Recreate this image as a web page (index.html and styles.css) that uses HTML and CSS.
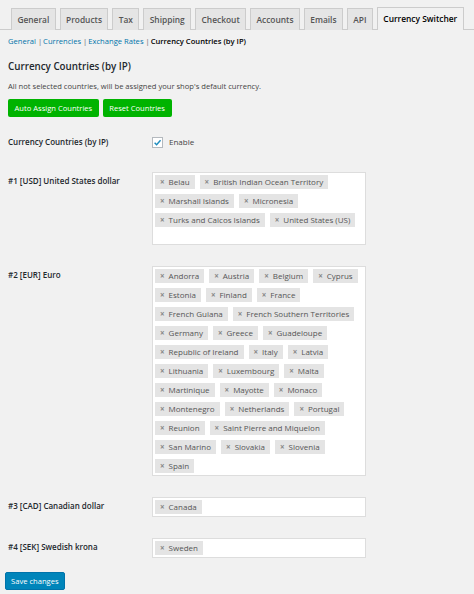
FILE: index.html
```html
<!DOCTYPE html>
<html lang="en">
    <head>
        <meta charset="UTF-8">
        <title>Currency Switcher Settings</title>
        <link rel="stylesheet" href="styles.css">
    </head>
    <body>
        <nav class="nav-tabs">
            <a class="nav-tab">General</a>
            <a class="nav-tab">Products</a>
            <a class="nav-tab">Tax</a>
            <a class="nav-tab">Shipping</a>
            <a class="nav-tab">Checkout</a>
            <a class="nav-tab">Accounts</a>
            <a class="nav-tab">Emails</a>
            <a class="nav-tab">API</a>
            <a class="nav-tab active">Currency Switcher</a>
        </nav>
        <main class="wrap">
            <ul class="subsubsub">
                <li><a>General</a> |</li>
                <li><a>Currencies</a> |</li>
                <li><a>Exchange Rates</a> |</li>
                <li class="current">Currency Countries (by IP)</li>
            </ul>
            <h2>Currency Countries (by IP)</h2>
            <p class="desc">All not selected countries, will be assigned your shop's default currency.</p>
            <div class="actions">
                <button class="btn-green">Auto Assign Countries</button>
                <button class="btn-green">Reset Countries</button>
            </div>
            <div class="form-table">
                <div class="row">
                    <div class="th">Currency Countries (by IP)</div>
                    <label class="enable"><span class="checkbox"><svg viewBox="0 0 10 10" width="9" height="9"><path d="M1.8 5.2 L4 7.4 L8.4 2.4" fill="none" stroke="#1e8cbe" stroke-width="1.6"/></svg></span>Enable</label>
                </div>
                <div class="row">
                    <div class="th">#1 [USD] United States dollar</div>
                    <ul class="select">
                        <li class="chip">Belau</li>
                        <li class="chip">British Indian Ocean Territory</li>
                        <li class="chip">Marshall Islands</li>
                        <li class="chip">Micronesia</li>
                        <li class="chip">Turks and Caicos Islands</li>
                        <li class="chip">United States (US)</li>
                        <li class="search"></li>
                    </ul>
                </div>
                <div class="row">
                    <div class="th">#2 [EUR] Euro</div>
                    <ul class="select">
                        <li class="chip">Andorra</li>
                        <li class="chip">Austria</li>
                        <li class="chip">Belgium</li>
                        <li class="chip">Cyprus</li>
                        <li class="chip">Estonia</li>
                        <li class="chip">Finland</li>
                        <li class="chip">France</li>
                        <li class="chip">French Guiana</li>
                        <li class="chip">French Southern Territories</li>
                        <li class="chip">Germany</li>
                        <li class="chip">Greece</li>
                        <li class="chip">Guadeloupe</li>
                        <li class="chip">Republic of Ireland</li>
                        <li class="chip">Italy</li>
                        <li class="chip">Latvia</li>
                        <li class="chip">Lithuania</li>
                        <li class="chip">Luxembourg</li>
                        <li class="chip">Malta</li>
                        <li class="chip">Martinique</li>
                        <li class="chip">Mayotte</li>
                        <li class="chip">Monaco</li>
                        <li class="chip">Montenegro</li>
                        <li class="chip">Netherlands</li>
                        <li class="chip">Portugal</li>
                        <li class="chip">Reunion</li>
                        <li class="chip">Saint Pierre and Miquelon</li>
                        <li class="chip">San Marino</li>
                        <li class="chip">Slovakia</li>
                        <li class="chip">Slovenia</li>
                        <li class="chip">Spain</li>
                        <li class="search"></li>
                    </ul>
                </div>
                <div class="row">
                    <div class="th">#3 [CAD] Canadian dollar</div>
                    <ul class="select">
                        <li class="chip">Canada</li>
                        <li class="search"></li>
                    </ul>
                </div>
                <div class="row">
                    <div class="th">#4 [SEK] Swedish krona</div>
                    <ul class="select">
                        <li class="chip">Sweden</li>
                        <li class="search"></li>
                    </ul>
                </div>
            </div>
            <button class="btn-primary">Save changes</button>
        </main>
    </body>
</html>
```

FILE: styles.css
```css
body{
    font-family: "Open Sans", "Noto Sans", sans-serif;
    font-size: 7.6px;
    margin: 0;
    padding: 0;
    background-color: #F1F1F1;
    color: #444;
    width: 474px;
    height: 594px;
    overflow: hidden;
}
.nav-tabs{
    display: flex;
    gap: 4px;
    padding: 8px 0 0 11px;
    border-bottom: 1px solid #CCC;
    height: 30px;
    box-sizing: border-box;
    align-items: flex-end;
}
.nav-tab{
    display: block;
    height: 22px;
    box-sizing: border-box;
    padding: 0 5.4px;
    line-height: 21px;
    font-size: 8.4px;
    font-weight: 600;
    color: #555;
    background-color: #E5E5E5;
    border: 1px solid #CCC;
    border-bottom: none;
    margin-bottom: -1px;
    white-space: nowrap;
}
.nav-tab.active{
    color: #000;
    background-color: #F1F1F1;
    height: 23px;
}
.wrap{
    padding: 0 8px;
}
.subsubsub{
    list-style: none;
    margin: 5px 0 0;
    padding: 0;
    display: flex;
    gap: 1px;
    line-height: 12px;
    color: #666;
}
.subsubsub a{
    color: #0073AA;
}
.subsubsub .current{
    color: #000;
    font-weight: 600;
}
h2{
    font-size: 9.8px;
    font-weight: 600;
    color: #23282D;
    margin: 12px 0 0;
    line-height: 16px;
}
.desc{
    margin: 5px 0 0;
    line-height: 12px;
}
.actions{
    display: flex;
    gap: 4px;
    margin-top: 7px;
}
.btn-green{
    font-family: inherit;
    font-size: 7.6px;
    color: #FFF;
    background-color: #00B300;
    border: none;
    border-radius: 2px;
    height: 18px;
    padding: 0 6.5px;
}
.form-table{
    margin-top: 16px;
}
.row{
    display: grid;
    grid-template-columns: 144px 214px;
    align-items: start;
    padding: 0 0 21px;
}
.row:first-child{
    padding-bottom: 24px;
}
.th{
    font-size: 8px;
    font-weight: 600;
    color: #23282D;
    line-height: 12px;
    padding-top: 3px;
}
.enable{
    display: flex;
    align-items: center;
    gap: 6px;
    line-height: 12px;
    padding-top: 3px;
    font-size: 8px;
}
.checkbox{
    width: 9px;
    height: 9px;
    border: 1px solid #B4B9BE;
    background-color: #FFF;
    display: flex;
    align-items: center;
    justify-content: center;
}
.select{
    list-style: none;
    margin: 0;
    padding: 2px;
    background-color: #FFF;
    border: 1px solid #DDD;
    display: flex;
    flex-wrap: wrap;
    gap: 5px;
}
.chip{
    background-color: #E4E4E4;
    height: 14px;
    line-height: 14px;
    padding: 0 5px;
    font-size: 8px;
    color: #555;
    white-space: nowrap;
}
.chip::before{
    content: "\00D7";
    color: #888;
    font-weight: 700;
    margin-right: 4px;
}
.search{
    width: 30px;
    height: 10px;
}
.btn-primary{
    font-family: inherit;
    font-size: 7.6px;
    color: #FFF;
    background-color: #0085BA;
    border: 1px solid #0073AA;
    border-radius: 2px;
    height: 18px;
    padding: 0 5px;
    margin: -7px 0 0 -3px;
    display: block;
}
```
